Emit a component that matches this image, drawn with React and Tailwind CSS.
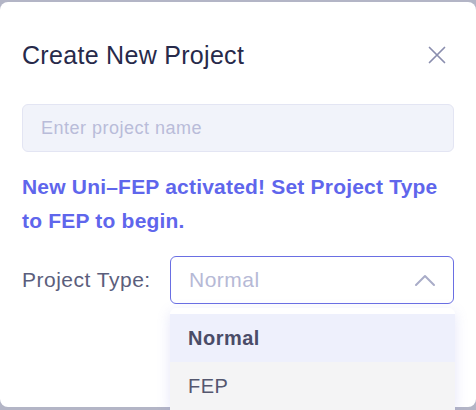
import { useState } from "react"

function CloseIcon() {
	return (
		<svg width="18" height="18" viewBox="0 0 18 18" fill="none">
			<path d="M1.5 1.5 L16.5 16.5 M16.5 1.5 L1.5 16.5" stroke="#8a8eae" strokeWidth="1.7" strokeLinecap="round" />
		</svg>
	)
}

function ChevronUp() {
	return (
		<svg width="22" height="14" viewBox="0 0 22 14" fill="none">
			<path d="M2 12 L11 3 L20 12" stroke="#a9acc8" strokeWidth="2" strokeLinecap="round" strokeLinejoin="round" />
		</svg>
	)
}

export default function App() {
	const [type] = useState("Normal")
	const options = ["Normal", "FEP"]

	return (
		<div
			className="w-[476px] h-[410px] overflow-hidden bg-[#b3b5c6] pt-[2px]"
			style={{ fontFamily: '"Liberation Sans", Arial, sans-serif' }}
		>
			<div className="relative h-[405px] bg-white rounded-[8px] px-[22px] pt-[38px]">
				<div className="flex items-center justify-between">
					<h2 className="text-[25px] leading-[30px] tracking-[0.3px] text-[#272a4a]">Create New Project</h2>
					<button className="mr-[8px]">
						<CloseIcon />
					</button>
				</div>

				<input
					placeholder="Enter project name"
					className="mt-[34px] w-full h-[48px] rounded-[6px] border border-[#e3e5f3] bg-[#f1f3fa] px-[18px] text-[18px] tracking-[0.5px] placeholder:text-[#b9bcd9] outline-none"
				/>

				<p className="mt-[18px] text-[21px] leading-[34px] font-bold tracking-[0.2px] text-[#5f66ec]">
					New Uni–FEP activated! Set Project Type to FEP to begin.
				</p>

				<div className="mt-[18px] flex items-center">
					<span className="w-[148px] text-[21px] tracking-[0.5px] text-[#5b5e7c]">Project Type:</span>
					<div className="relative flex-1">
						<div className="h-[48px] rounded-[6px] border border-[#6a6fe3] flex items-center justify-between pl-[18px] pr-[17px]">
							<span className="text-[21px] tracking-[0.5px] text-[#b6b9d6]">{type}</span>
							<ChevronUp />
						</div>
						<div className="absolute left-0 right-[-1px] top-[52px] rounded-[6px] bg-white shadow-[0_4px_14px_rgba(110,115,220,0.18)] pt-[6px]">
							{options.map((opt) => (
								<div
									key={opt}
									className={
										opt === type
											? "h-[48px] flex items-center px-[18px] bg-[#eef0fc] text-[20px] tracking-[0.5px] font-bold text-[#4a4c68]"
											: "h-[48px] flex items-center px-[18px] bg-[#f4f4f5] text-[20px] tracking-[0.5px] text-[#54576f]"
									}
								>
									{opt}
								</div>
							))}
						</div>
					</div>
				</div>
			</div>
		</div>
	)
}
